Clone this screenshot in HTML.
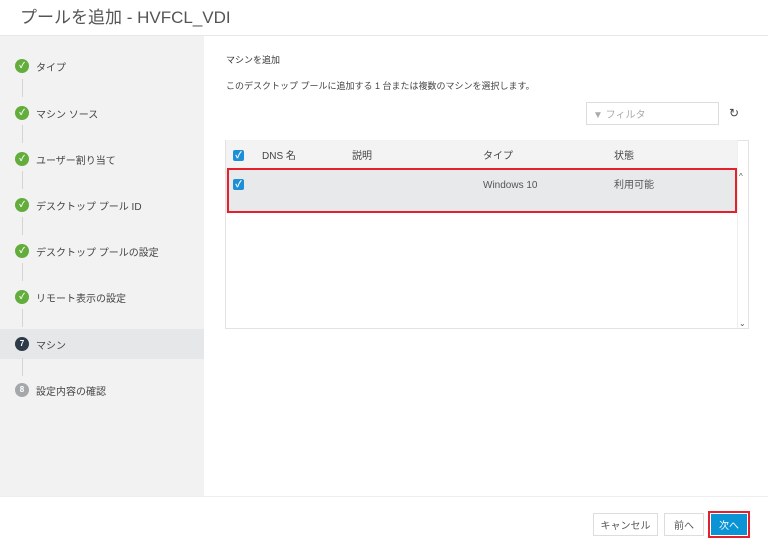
<!DOCTYPE html><html><head><meta charset="utf-8"><style>
*{box-sizing:border-box;margin:0;padding:0}
body{width:768px;height:549px;background:#fff;font-family:"Liberation Sans","Noto Sans CJK JP",sans-serif;color:#333;position:relative;overflow:hidden;font-size:10px;line-height:14px}
.abs{position:absolute}
.title{left:20px;top:6px;font-size:17px;line-height:24px;color:#555}
.hline{left:0;right:0;height:1px;background:#e8e8e8}
.side{left:0;top:36px;width:204px;height:460px;background:#f2f2f2}
.step{position:absolute;left:15px;font-size:10px;color:#444;height:14px;line-height:14px;white-space:nowrap}
.c{position:absolute;left:0;top:0;width:14px;height:14px;border-radius:50%;background:#62ad3c;color:#fff;font-size:8px;font-weight:bold;text-align:center;line-height:14px}
.step .t{position:absolute;left:21px;top:3px}
.vl{position:absolute;left:22px;width:1px;height:18px;background:#d4d4d4}
.cb{position:absolute;width:11px;height:11px;border-radius:2px;background:#1d8fd6;color:#fff;font-size:9px;line-height:11px;text-align:center;font-weight:bold}
.btn{position:absolute;top:513px;height:23px;border:1px solid #ddd;background:#fff;font-size:10px;color:#555;text-align:center;line-height:25px}
</style></head><body>
<div class="abs title">プールを追加 - HVFCL_VDI</div>
<div class="abs hline" style="top:35px"></div>
<div class="abs side"></div>
<div class="abs" style="left:0;top:329px;width:204px;height:30px;background:#e6e7e9"></div>
<div class="step" style="top:59px"><span class="c">✓</span><span class="t">タイプ</span></div>
<div class="vl" style="top:79px"></div>
<div class="step" style="top:106px"><span class="c">✓</span><span class="t">マシン ソース</span></div>
<div class="vl" style="top:125px"></div>
<div class="step" style="top:152px"><span class="c">✓</span><span class="t">ユーザー割り当て</span></div>
<div class="vl" style="top:171px"></div>
<div class="step" style="top:198px"><span class="c">✓</span><span class="t">デスクトップ プール ID</span></div>
<div class="vl" style="top:217px"></div>
<div class="step" style="top:244px"><span class="c">✓</span><span class="t">デスクトップ プールの設定</span></div>
<div class="vl" style="top:263px"></div>
<div class="step" style="top:290px"><span class="c">✓</span><span class="t">リモート表示の設定</span></div>
<div class="vl" style="top:309px"></div>
<div class="step" style="top:337px"><span class="c" style="background:#2e3a47">7</span><span class="t">マシン</span></div>
<div class="vl" style="top:358px"></div>
<div class="step" style="top:383px"><span class="c" style="background:#a5a8ab">8</span><span class="t">設定内容の確認</span></div>

<div class="abs" style="left:226px;top:53px;font-size:9px;color:#333">マシンを追加</div>
<div class="abs" style="left:226px;top:79px;font-size:9px;color:#444">このデスクトップ プールに追加する 1 台または複数のマシンを選択します。</div>
<div class="abs" style="left:586px;top:102px;width:133px;height:23px;border:1px solid #ddd;font-size:10px;color:#aaa;padding:6px 0 0 6px">▼ フィルタ</div>
<div class="abs" style="left:729px;top:106px;font-size:12px;color:#444">↻</div>

<div class="abs" style="left:225px;top:140px;width:524px;height:189px;border:1px solid #e2e2e2"></div>
<div class="abs" style="left:226px;top:140px;width:511px;height:30px;background:#f3f3f3"></div>
<div class="abs" style="left:226px;top:170px;width:511px;height:43px;background:#e8e9ea"></div>
<div class="abs" style="left:737px;top:140px;width:1px;height:188px;background:#eee"></div>
<div class="abs" style="left:739px;top:170px;font-size:8px;color:#555">^</div>
<div class="abs" style="left:739px;top:317px;font-size:8px;color:#555">⌄</div>
<div class="cb" style="left:233px;top:150px">✓</div>
<div class="abs" style="left:262px;top:150px;color:#444">DNS 名</div>
<div class="abs" style="left:352px;top:150px;color:#444">説明</div>
<div class="abs" style="left:483px;top:150px;color:#444">タイプ</div>
<div class="abs" style="left:614px;top:150px;color:#444">状態</div>
<div class="cb" style="left:233px;top:179px">✓</div>
<div class="abs" style="left:483px;top:179px;color:#555">Windows 10</div>
<div class="abs" style="left:614px;top:179px;color:#555">利用可能</div>
<div class="abs" style="left:227px;top:168px;width:510px;height:45px;border:2px solid #e3202c"></div>

<div class="abs hline" style="top:496px;background:#eee"></div>
<div class="btn" style="left:593px;width:65px">キャンセル</div>
<div class="btn" style="left:664px;width:40px">前へ</div>
<div class="abs" style="left:708px;top:511px;width:42px;height:27px;border:2px solid #e3202c"></div>
<div class="btn" style="left:711px;top:514px;width:36px;height:21px;line-height:23px;background:#0a94d6;border-color:#0a94d6;color:#fff">次へ</div>
</body></html>
